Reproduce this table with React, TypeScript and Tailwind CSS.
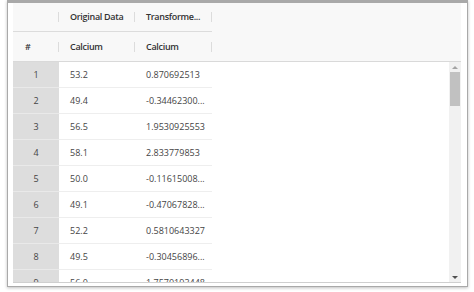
const rows = [
  { n: 1, orig: '53.2', tr: '0.870692513' },
  { n: 2, orig: '49.4', tr: '-0.34462300...' },
  { n: 3, orig: '56.5', tr: '1.9530925553' },
  { n: 4, orig: '58.1', tr: '2.833779853' },
  { n: 5, orig: '50.0', tr: '-0.11615008...' },
  { n: 6, orig: '49.1', tr: '-0.47067828...' },
  { n: 7, orig: '52.2', tr: '0.5810643327' },
  { n: 8, orig: '49.5', tr: '-0.30456896...' },
  { n: 9, orig: '56.0', tr: '1.7570193448' },
];

function Sep() {
  return <div className="w-px h-[10px] bg-[#dcdcdc]" />;
}

export default function App() {
  return (
    <div className="w-[474px] h-[292px] bg-white overflow-hidden" style={{ fontFamily: '"Open Sans", "Noto Sans", sans-serif' }}>
      <div className="ml-[7px] w-[461px] h-[287px] border-x border-b border-t-[3px] border-[#a9a9a9] bg-white shadow-[0_1px_3px_rgba(0,0,0,0.25)] pl-[5px] pr-[6px]">
        <div className="h-[280px] border-b border-[#cfcfcf] flex flex-col overflow-hidden text-[#333]">
          {/* Header */}
          <div className="h-[59px] shrink-0 bg-[#f8f8f8] border-b border-[#d9d9d9] flex flex-col text-[9px] font-semibold tracking-[-0.3px]">
            <div className="h-[29px] flex items-center">
              <div className="w-[199px] h-full flex items-center border-b border-[#dcdcdc]">
                <div className="w-[46px] h-full flex items-center justify-end"><Sep /></div>
                <div className="w-[76px] h-full flex items-center justify-between pl-[11px]">
                  <span>Original Data</span>
                  <Sep />
                </div>
                <div className="w-[77px] h-full flex items-center justify-between pl-[11px]">
                  <span>Transforme...</span>
                  <Sep />
                </div>
              </div>
            </div>
            <div className="h-[29px] flex items-center">
              <div className="w-[46px] h-full flex items-center justify-between pl-[12px]">
                <span>#</span>
                <Sep />
              </div>
              <div className="w-[76px] h-full flex items-center justify-between pl-[11px]">
                <span>Calcium</span>
                <Sep />
              </div>
              <div className="w-[77px] h-full flex items-center justify-between pl-[11px]">
                <span>Calcium</span>
                <Sep />
              </div>
            </div>
          </div>
          {/* Body */}
          <div className="flex-1 flex min-h-0">
            <div className="flex-1 text-[9px] text-[#444]">
              {rows.map((r) => (
                <div key={r.n} className="h-[26px] flex">
                  <div className="w-[46px] h-full bg-[#dddddd] border-b border-[#e9e9e9] flex items-center justify-center">{r.n}</div>
                  <div className="w-[153px] h-full flex items-center border-b border-[#eeeeee]">
                    <div className="w-[76px] pl-[11px]">{r.orig}</div>
                    <div className="w-[77px] pl-[11px] whitespace-nowrap">{r.tr}</div>
                  </div>
                </div>
              ))}
            </div>
            {/* Scrollbar */}
            <div className="w-[12px] h-full bg-[#f1f1f1] flex flex-col items-center">
              <div className="h-[10px] flex items-center justify-center">
                <div className="w-0 h-0 border-x-[3px] border-x-transparent border-b-[3px] border-b-[#a3a3a3]" />
              </div>
              <div className="w-[10px] h-[34px] bg-[#c1c1c1]" />
              <div className="flex-1" />
              <div className="h-[10px] flex items-center justify-center">
                <div className="w-0 h-0 border-x-[3px] border-x-transparent border-t-[3px] border-t-[#505050]" />
              </div>
            </div>
          </div>
        </div>
      </div>
    </div>
  );
}
